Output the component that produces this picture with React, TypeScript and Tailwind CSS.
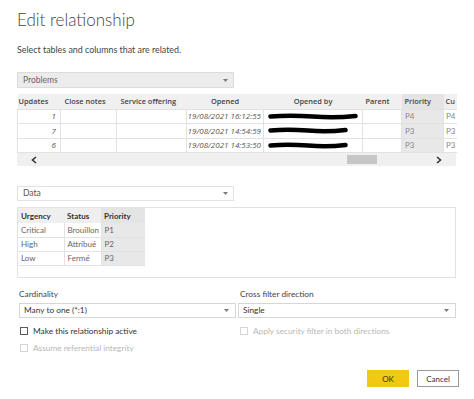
import React from 'react';

const font = { fontFamily: 'Lato, "Open Sans", sans-serif' };
const openSans = { fontFamily: '"Open Sans", sans-serif' };

const Caret = () => (
  <svg width="5" height="3" viewBox="0 0 5 3" className="shrink-0">
    <path d="M0 0 L5 0 L2.5 3 Z" fill="#7a7a7a" />
  </svg>
);

const Dropdown: React.FC<{ label: string; className?: string }> = ({ label, className }) => (
  <div className={`flex items-center justify-between ${className ?? ''}`}>
    <span className="truncate">{label}</span>
    <Caret />
  </div>
);

const Scribble: React.FC<{ w: number }> = ({ w }) => (
  <svg width={w} height="7" viewBox={`0 0 ${w} 7`} className="block">
    <path
      d={`M2.5 3.5 Q ${w * 0.25} 2 ${w * 0.5} 3.6 T ${w - 2.5} 3`}
      stroke="#000"
      strokeWidth="4.5"
      strokeLinecap="round"
      fill="none"
    />
  </svg>
);

const Checkbox: React.FC<{ label: string; disabled?: boolean }> = ({ label, disabled }) => (
  <div className="flex items-center gap-[5px] h-[14px]">
    <span
      className={`w-[8px] h-[8px] border ${disabled ? 'border-[#d6d6d6]' : 'border-[#5a5a5a]'}`}
    />
    <span className={disabled ? 'text-[#b8b8b8]' : 'text-[#333]'}>{label}</span>
  </div>
);

const rows = [
  { n: '1', d: '19/08/2021 16:12:55', s: 90, p: 'P4' },
  { n: '7', d: '19/08/2021 14:54:59', s: 80, p: 'P3' },
  { n: '6', d: '19/08/2021 14:53:50', s: 80, p: 'P3' },
];

const data = [
  ['Critical', 'Brouillon', 'P1'],
  ['High', 'Attribué', 'P2'],
  ['Low', 'Fermé', 'P3'],
];

export default function App() {
  return (
    <div className="w-[474px] h-[399px] bg-white text-[#333] pl-[17px] overflow-hidden" style={font}>
      <h1 className="pt-[8px] text-[17px] leading-[24px] font-light text-[#444]">Edit relationship</h1>
      <p className="mt-[11px] text-[8.9px] leading-[14px] text-[#444]">
        Select tables and columns that are related.
      </p>

      <Dropdown
        label="Problems"
        className="mt-[15px] w-[217px] h-[16px] bg-[#ececec] border border-[#dcdcdc] pl-[5px] pr-[5px] text-[8.5px] text-[#666]"
      />

      <div className="mt-[6px] w-[439px] text-[8px]">
        <table className="table-fixed border-collapse w-[439px]">
          <colgroup>
            <col className="w-[43px]" />
            <col className="w-[56px]" />
            <col className="w-[70px]" />
            <col className="w-[77px]" />
            <col className="w-[99px]" />
            <col className="w-[39px]" />
            <col className="w-[42px]" />
            <col className="w-[13px]" />
          </colgroup>
          <thead>
            <tr className="h-[15px] bg-[#f0f0f0] text-[#444] text-[7.4px]" style={openSans}>
              <th className="text-left pl-[1px] font-semibold">Updates</th>
              <th className="text-left pl-[4px] font-semibold">Close notes</th>
              <th className="text-left pl-[4px] font-semibold whitespace-nowrap">Service offering</th>
              <th className="text-center font-semibold">Opened</th>
              <th className="text-center font-semibold">Opened by</th>
              <th className="text-left pl-[3px] font-semibold">Parent</th>
              <th className="text-left pl-[3px] font-semibold bg-[#e4e4e4]">Priority</th>
              <th className="text-left pl-[2px] font-semibold overflow-hidden whitespace-nowrap">Cu</th>
            </tr>
          </thead>
          <tbody>
            {rows.map((r) => (
              <tr key={r.d} className="h-[14.5px]">
                <td className="border border-[#e2e2e2] text-right pr-[4px] italic text-[#555]" style={openSans}>
                  {r.n}
                </td>
                <td className="border border-[#e2e2e2]" />
                <td className="border border-[#e2e2e2]" />
                <td
                  className="border border-[#e2e2e2] text-right pr-[2px] italic text-[#555] whitespace-nowrap"
                  style={openSans}
                >
                  {r.d}
                </td>
                <td className="border border-[#e2e2e2] pl-[4px]">
                  <Scribble w={r.s} />
                </td>
                <td className="border border-[#e2e2e2]" />
                <td className="border border-[#e2e2e2] bg-[#e8e8e8] pl-[3px] text-[#888]">{r.p}</td>
                <td className="border-y border-[#e2e2e2] pl-[2px] text-[#888]">{r.p}</td>
              </tr>
            ))}
          </tbody>
        </table>
        <div className="h-[13px] bg-[#f0f0f0] flex items-center">
          <svg width="6" height="8" viewBox="0 0 6 8" className="ml-[14px]">
            <path d="M5 1 L1.5 4 L5 7" stroke="#333" strokeWidth="1.6" fill="none" />
          </svg>
          <div className="ml-[310px] w-[30px] h-[9px] bg-[#c6c6c6]" />
          <svg width="6" height="8" viewBox="0 0 6 8" className="ml-[59px]">
            <path d="M1 1 L4.5 4 L1 7" stroke="#333" strokeWidth="1.6" fill="none" />
          </svg>
        </div>
      </div>

      <Dropdown
        label="Data"
        className="mt-[20px] w-[217px] h-[15px] bg-white border border-[#e2e2e2] pl-[5px] pr-[5px] text-[8.5px] text-[#555]"
      />

      <div className="mt-[6px] w-[439px] h-[71px] border border-[#e2e2e2] text-[8px]">
        <table className="table-fixed border-collapse w-[127px]">
          <colgroup>
            <col className="w-[46px]" />
            <col className="w-[37px]" />
            <col className="w-[44px]" />
          </colgroup>
          <thead>
            <tr className="h-[15px] bg-[#efefef] text-[#333]">
              <th className="text-left pl-[3px] font-bold">Urgency</th>
              <th className="text-left pl-[3px] font-bold">Status</th>
              <th className="text-left pl-[3px] font-bold bg-[#e4e4e4]">Priority</th>
            </tr>
          </thead>
          <tbody>
            {data.map((d) => (
              <tr key={d[0]} className="h-[14px] text-[#666]">
                <td className="border-b border-r border-[#e2e2e2] pl-[3px]">{d[0]}</td>
                <td className="border-b border-r border-[#e2e2e2] pl-[3px]">{d[1]}</td>
                <td className="border-b border-[#e2e2e2] bg-[#e8e8e8] pl-[3px]">{d[2]}</td>
              </tr>
            ))}
          </tbody>
        </table>
      </div>

      <div className="mt-[10px] flex gap-[2px] text-[8.3px]">
        <div className="w-[219px] pl-[2px]">
          <div className="leading-[12px] text-[#444]">Cardinality</div>
          <Dropdown
            label="Many to one (*:1)"
            className="mt-[3px] h-[15px] border border-[#d6d6d6] pl-[4px] pr-[6px] text-[#333]"
          />
          <div className="mt-[6px] ml-[1px] flex flex-col gap-[3px]">
            <Checkbox label="Make this relationship active" />
            <Checkbox label="Assume referential integrity" disabled />
          </div>
        </div>
        <div className="w-[218px]">
          <div className="leading-[12px] pl-[2px] text-[#444]">Cross filter direction</div>
          <Dropdown
            label="Single"
            className="mt-[3px] h-[15px] border border-[#d6d6d6] pl-[4px] pr-[6px] text-[#333]"
          />
          <div className="mt-[6px] ml-[2px]">
            <Checkbox label="Apply security filter in both directions" disabled />
          </div>
        </div>
      </div>

      <div className="mt-[15px] flex justify-end gap-[8px] pr-[15px] text-[8px]">
        <button className="w-[42px] h-[17px] bg-[#f2c811] text-[#333]">OK</button>
        <button className="w-[42px] h-[17px] bg-white border border-[#9a9a9a] text-[#333]">Cancel</button>
      </div>
    </div>
  );
}
